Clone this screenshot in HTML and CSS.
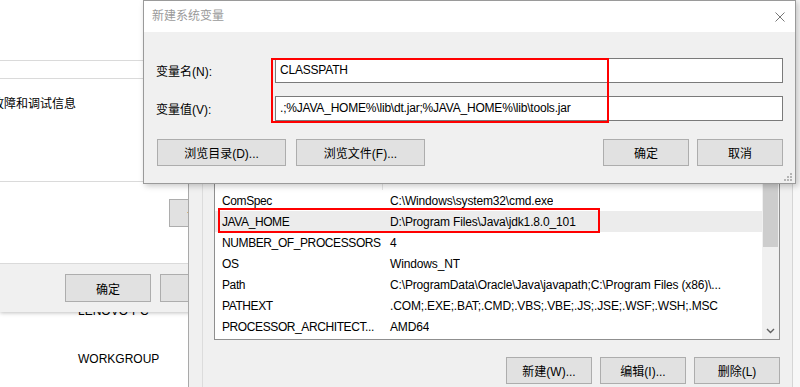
FILE: index.html
```html
<!DOCTYPE html>
<html lang="zh-CN">
<head>
    <meta charset="UTF-8">
    <meta name="viewport" content="width=device-width, initial-scale=1.0">
    <title>新建系统变量</title>
    <link rel="stylesheet" href="styles.css">
</head>
<body>
    <div class="desktop">
        <!-- 最底层：系统信息窗口 -->
        <div class="cp-window">
            <div class="cp-row">LENOVO-PC</div>
            <div class="cp-row cp-row-group">WORKGROUP</div>
        </div>

        <!-- 系统属性 / 高级 -->
        <div class="sys-window">
            <div class="sys-head"></div>
            <div class="sys-tabline"></div>
            <div class="sys-body">
                <p class="sys-text">故障和调试信息</p>
            </div>
            <div class="sys-section">
                <button class="btn sys-setbtn">设置(T)...</button>
            </div>
            <div class="sys-footer">
                <button class="btn sys-btn">确定</button>
                <button class="btn sys-btn">取消</button>
            </div>
        </div>

        <!-- 环境变量 -->
        <div class="env-window">
            <div class="env-group">
                <div class="list">
                    <div class="list-main">
                        <div class="list-head">
                            <span class="col-name">变量</span>
                            <span class="col-value">值</span>
                        </div>
                        <div class="list-row"><span class="col-name">ComSpec</span><span class="col-value">C:\Windows\system32\cmd.exe</span></div>
                        <div class="list-row selected"><span class="col-name">JAVA_HOME</span><span class="col-value">D:\Program Files\Java\jdk1.8.0_101</span></div>
                        <div class="list-row"><span class="col-name">NUMBER_OF_PROCESSORS</span><span class="col-value">4</span></div>
                        <div class="list-row"><span class="col-name">OS</span><span class="col-value">Windows_NT</span></div>
                        <div class="list-row"><span class="col-name">Path</span><span class="col-value">C:\ProgramData\Oracle\Java\javapath;C:\Program Files (x86)\...</span></div>
                        <div class="list-row"><span class="col-name">PATHEXT</span><span class="col-value">.COM;.EXE;.BAT;.CMD;.VBS;.VBE;.JS;.JSE;.WSF;.WSH;.MSC</span></div>
                        <div class="list-row"><span class="col-name">PROCESSOR_ARCHITECT...</span><span class="col-value">AMD64</span></div>
                    </div>
                    <div class="scrollbar">
                        <div class="scroll-arrow"></div>
                        <div class="scroll-thumb"></div>
                        <div class="scroll-track"></div>
                        <div class="scroll-arrow">
                            <svg width="9" height="6" viewBox="0 0 9 6"><path d="M1 1 L4.5 4.5 L8 1" fill="none" stroke="#606060" stroke-width="1.4"/></svg>
                        </div>
                    </div>
                </div>
                <div class="env-actions">
                    <button class="btn env-btn">新建(W)...</button>
                    <button class="btn env-btn">编辑(I)...</button>
                    <button class="btn env-btn">删除(L)</button>
                </div>
            </div>
        </div>

        <!-- 新建系统变量 对话框 -->
        <div class="dialog">
            <div class="dialog-title">
                <span>新建系统变量</span>
                <svg class="close-icon" width="10" height="10" viewBox="0 0 10 10"><path d="M0.5 0.5 L9.5 9.5 M9.5 0.5 L0.5 9.5" stroke="#777" stroke-width="1"/></svg>
            </div>
            <div class="dialog-body">
                <div class="field">
                    <label class="field-label">变量名(N):</label>
                    <div class="field-input">CLASSPATH</div>
                </div>
                <div class="field field-second">
                    <label class="field-label">变量值(V):</label>
                    <div class="field-input">.;%JAVA_HOME%\lib\dt.jar;%JAVA_HOME%\lib\tools.jar</div>
                </div>
                <div class="dialog-actions">
                    <div class="btn-group">
                        <button class="btn browse-btn">浏览目录(D)...</button>
                        <button class="btn browse-btn">浏览文件(F)...</button>
                    </div>
                    <div class="btn-group btn-group-right">
                        <button class="btn dlg-btn">确定</button>
                        <button class="btn dlg-btn">取消</button>
                    </div>
                </div>
            </div>
            <svg class="grip" width="9" height="9" viewBox="0 0 9 9" fill="#b5b5b5">
                <rect x="7" y="1" width="2" height="2"/>
                <rect x="4" y="4" width="2" height="2"/><rect x="7" y="4" width="2" height="2"/>
                <rect x="1" y="7" width="2" height="2"/><rect x="4" y="7" width="2" height="2"/><rect x="7" y="7" width="2" height="2"/>
            </svg>
        </div>

        <!-- 红框标注 -->
        <div class="mark mark-fields"></div>
        <div class="mark mark-row"></div>
    </div>
</body>
</html>
```

FILE: styles.css
```css
* {
    box-sizing: border-box;
}

body {
    margin: 0;
    background: #f7f7f7;
    font-family: "Liberation Sans", "Noto Sans CJK SC", sans-serif;
    font-size: 12px;
    color: #000;
}

.desktop {
    position: relative;
    width: 800px;
    height: 387px;
    overflow: hidden;
}

button {
    font-family: inherit;
    font-size: 12px;
    color: #000;
}

.btn {
    background: #e1e1e1;
    border: 1px solid #adadad;
    padding: 0;
    height: 27px;
    white-space: nowrap;
}

/* 系统信息 */
.cp-window {
    position: absolute;
    left: 0;
    top: 290px;
    width: 200px;
    height: 100px;
    background: #fff;
    padding: 13px 0 0 78px;
}

.cp-row {
    line-height: 16px;
}

.cp-row-group {
    margin-top: 32px;
}

/* 系统属性 */
.sys-window {
    position: absolute;
    left: 0;
    top: 0;
    width: 260px;
    height: 312px;
    background: #fff;
    box-shadow: 0 1px 4px rgba(0, 0, 0, 0.25);
}

.sys-head {
    height: 61px;
    border-bottom: 1px solid #dadada;
}

.sys-tabline {
    height: 18px;
    border-bottom: 1px solid #dadada;
}

.sys-body {
    height: 103px;
    border-bottom: 1px solid #dadada;
    padding-top: 17px;
}

.sys-text {
    margin: 0 0 0 -8px;
    line-height: 16px;
}

.sys-section {
    height: 82px;
    border-bottom: 1px solid #dadada;
    padding: 17px 0 0 169px;
}

.sys-setbtn {
    width: 86px;
    height: 28px;
}

.sys-footer {
    height: 48px;
    background: #f0f0f0;
    display: flex;
    gap: 9px;
    padding: 10px 0 0 65px;
}

.sys-btn {
    width: 86px;
    height: 28px;
}

/* 环境变量 */
.env-window {
    position: absolute;
    left: 188px;
    top: 140px;
    width: 605px;
    height: 260px;
    background: #f0f0f0;
    border-left: 1px solid #a9a9a9;
    border-right: 1px solid #d5d5d5;
    padding-top: 20px;
}

.env-group {
    margin-left: 13px;
    border-left: 1px solid #dcdcdc;
    padding-left: 11px;
    height: 100%;
}

.list {
    width: 566px;
    height: 180px;
    border: 1px solid #8f8f8f;
    background: #fff;
    display: flex;
}

.list-main {
    flex: 1;
}

.list-head {
    height: 29px;
    display: flex;
}

.list-head .col-name {
    border-right: 1px solid #e5e5e5;
}

.list-row {
    height: 21px;
    display: flex;
    align-items: center;
    white-space: nowrap;
}

.list-row.selected {
    background: #ececec;
}

.col-name {
    width: 168px;
    padding-left: 7px;
    flex-shrink: 0;
    overflow: hidden;
    letter-spacing: -0.4px;
}

.col-value {
    padding-left: 7px;
    overflow: hidden;
    letter-spacing: -0.15px;
}

.scrollbar {
    width: 17px;
    background: #f0f0f0;
    display: flex;
    flex-direction: column;
}

.scroll-arrow {
    height: 17px;
    display: flex;
    align-items: center;
    justify-content: center;
}

.scroll-thumb {
    height: 69px;
    margin: 0 1px;
    background: #cdcdcd;
}

.scroll-track {
    flex: 1;
}

.env-actions {
    width: 566px;
    margin-top: 17px;
    display: flex;
    justify-content: flex-end;
    gap: 8px;
}

.env-btn {
    width: 86px;
}

/* 新建系统变量 */
.dialog {
    position: absolute;
    left: 143px;
    top: 0;
    width: 653px;
    height: 184px;
    background: #f0f0f0;
    border: 1px solid #9a9a9a;
    box-shadow: 2px 2px 6px rgba(0, 0, 0, 0.22);
}

.dialog-title {
    height: 31px;
    background: #fff;
    color: #9a9a9a;
    line-height: 31px;
    padding-left: 8px;
    display: flex;
    justify-content: space-between;
    align-items: center;
}

.close-icon {
    margin-right: 10px;
}

.dialog-body {
    padding: 26px 12px 0 12px;
}

.field {
    display: flex;
    align-items: center;
    height: 25px;
}

.field-second {
    margin-top: 13px;
}

.field-label {
    width: 119px;
}

.field-input {
    width: 508px;
    height: 25px;
    background: #fff;
    border: 1px solid #7a7a7a;
    padding-left: 4px;
    line-height: 23px;
    white-space: nowrap;
    overflow: hidden;
    letter-spacing: -0.2px;
}

.dialog-actions {
    margin-top: 18px;
    display: flex;
    justify-content: space-between;
    padding: 0 0 0 1px;
    width: 627px;
}

.btn-group {
    display: flex;
    gap: 10px;
}

.btn-group-right {
    gap: 8px;
}

.browse-btn {
    width: 129px;
}

.dlg-btn {
    width: 86px;
}

.grip {
    position: absolute;
    right: 3px;
    bottom: 2px;
}

/* 标注 */
.mark {
    position: absolute;
    border: 2px solid #f00;
}

.mark-fields {
    left: 271px;
    top: 58px;
    width: 338px;
    height: 65px;
}

.mark-row {
    left: 218px;
    top: 208px;
    width: 382px;
    height: 25px;
}
```
